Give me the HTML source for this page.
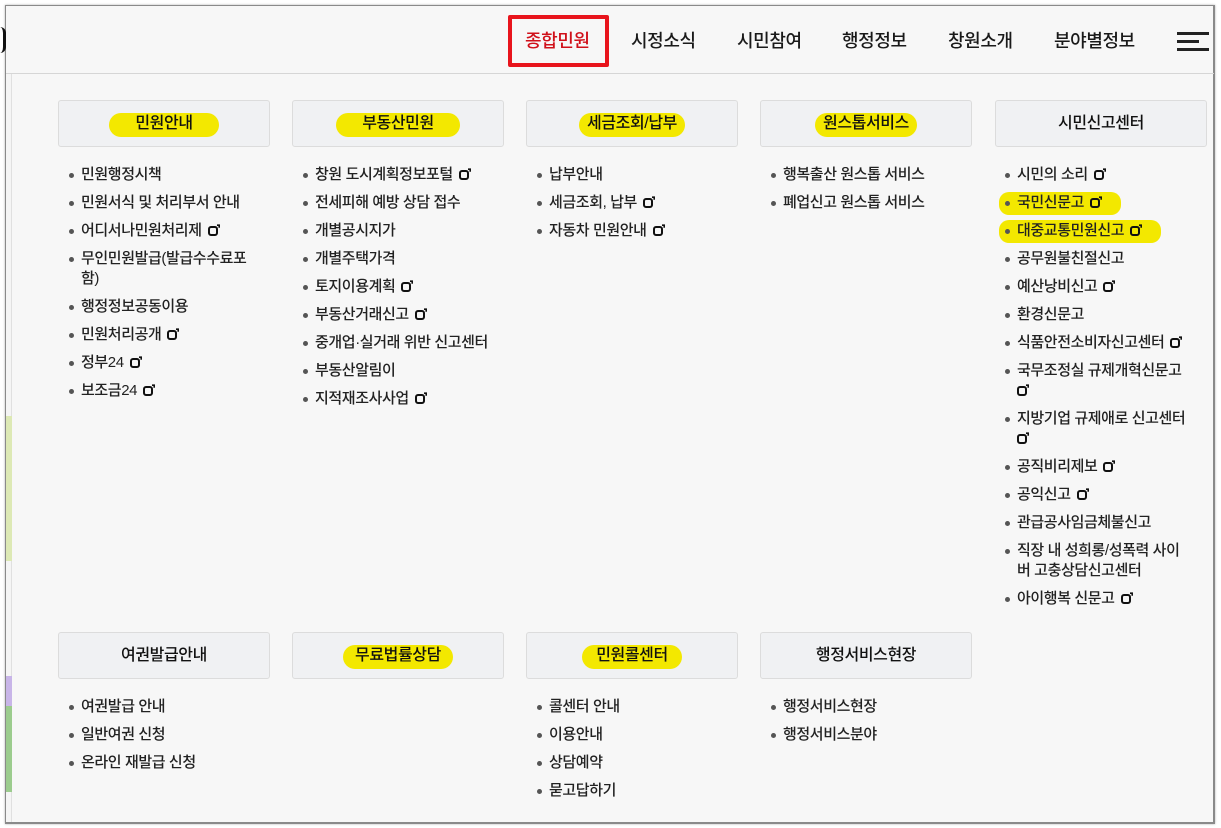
<!DOCTYPE html>
<html><head><meta charset="utf-8"><style>
*{margin:0;padding:0;box-sizing:border-box}
body{width:1221px;height:828px;background:#fff;position:relative;overflow:hidden;font-family:"Liberation Sans","Noto Sans CJK KR",sans-serif;color:#222}
.frame{position:absolute;left:5px;top:5px;width:1210px;height:819px;border:1px solid #8a8a8a;border-right:2px solid #8a8a8a;border-bottom:2px solid #8a8a8a;background:#f7f7f7;box-shadow:0 0 2px #aaa}
.strip{position:absolute;left:6px;top:74px;width:6px;height:748px;background:#f5f5f5;border-right:1px solid #e0e0e0}
.g1{position:absolute;left:6px;top:416px;width:6px;height:145px;background:#dde9b5}
.g2{position:absolute;left:6px;top:676px;width:6px;height:116px;background:#9ccc8e}
.g3{position:absolute;left:6px;top:676px;width:6px;height:30px;background:#c8b5e8}
.nav{position:absolute;left:6px;top:6px;width:1208px;height:68px;border-bottom:1px solid #d6d6d6}
.ni{position:absolute;top:24px;font-size:18px;font-weight:500;color:#1a1a1a;letter-spacing:-0.4px;line-height:22px}
.red{position:absolute;width:101px;height:52px;border:4px solid #e8141c;border-radius:2px}
.hb{position:absolute;height:3px;background:#222;left:1177px}
.box{position:absolute;width:212px;height:47px;border:1px solid #dcdcdc;border-radius:3px;background:#f0f1f3;text-align:center;line-height:45px;font-size:16px;font-weight:500;color:#111;letter-spacing:-0.4px}
.hl{background:#f3e800;border-radius:12px;padding:2px 26px 5px}
ul{position:absolute;list-style:none;font-size:15px;font-weight:500;letter-spacing:-0.4px;color:#222;width:200px}
li{position:relative;padding-left:13px;line-height:20px;margin-bottom:8px}
li:before{content:"";position:absolute;left:1px;top:8px;width:5px;height:5px;border-radius:50%;background:#555}
.hl2{background:#f3e800;border-radius:10px;padding:2px 18px 4px 6px;margin-left:-18px;padding-left:18px}
svg.e{width:13px;height:12px;vertical-align:-1px;margin-left:6px}
</style></head><body>
<div class="frame"></div>
<div class="strip"></div><div class="g1"></div><div class="g2"></div><div class="g3"></div>
<div style="position:absolute;left:0;top:27px;width:6px;height:26px;border-right:3px solid #111;border-radius:0 10px 10px 0"></div>
<div class="nav">
<div class="red" style="left:502px;top:9px"></div>
<div class="ni" style="left:519px;color:#d0101a">종합민원</div>
<div class="ni" style="left:625px">시정소식</div>
<div class="ni" style="left:731px">시민참여</div>
<div class="ni" style="left:836px">행정정보</div>
<div class="ni" style="left:942px">창원소개</div>
<div class="ni" style="left:1048px">분야별정보</div>
</div>
<div class="hb" style="top:32px;width:32px"></div>
<div class="hb" style="top:40px;width:22px"></div>
<div class="hb" style="top:48px;width:32px"></div>

<svg width="0" height="0" style="position:absolute"><defs><symbol id="x" viewBox="0 0 13 12"><rect x="1" y="3" width="8" height="8" rx="2" fill="none" stroke="#111" stroke-width="2"/><path d="M9 1.2H11.2V3.8" fill="none" stroke="#111" stroke-width="1.6"/></symbol></defs></svg>

<div class="box" style="left:58px;top:100px"><span class="hl">민원안내</span></div>
<div class="box" style="left:292px;top:100px"><span class="hl">부동산민원</span></div>
<div class="box" style="left:526px;top:100px"><span class="hl" style="padding:2px 8px 5px">세금조회/납부</span></div>
<div class="box" style="left:760px;top:100px"><span class="hl" style="padding:2px 8px 5px">원스톱서비스</span></div>
<div class="box" style="left:995px;top:100px">시민신고센터</div>
<div class="box" style="left:58px;top:632px">여권발급안내</div>
<div class="box" style="left:292px;top:632px"><span class="hl" style="padding:2px 12px 5px">무료법률상담</span></div>
<div class="box" style="left:526px;top:632px"><span class="hl" style="padding:2px 14px 5px">민원콜센터</span></div>
<div class="box" style="left:760px;top:632px">행정서비스현장</div>

<ul style="left:68px;top:165px;width:190px">
<li>민원행정시책</li>
<li>민원서식 및 처리부서 안내</li>
<li>어디서나민원처리제<svg class="e"><use href="#x"/></svg></li>
<li>무인민원발급(발급수수료포함)</li>
<li>행정정보공동이용</li>
<li>민원처리공개<svg class="e"><use href="#x"/></svg></li>
<li>정부24<svg class="e"><use href="#x"/></svg></li>
<li>보조금24<svg class="e"><use href="#x"/></svg></li>
</ul>
<ul style="left:302px;top:165px">
<li>창원 도시계획정보포털<svg class="e"><use href="#x"/></svg></li>
<li>전세피해 예방 상담 접수</li>
<li>개별공시지가</li>
<li>개별주택가격</li>
<li>토지이용계획<svg class="e"><use href="#x"/></svg></li>
<li>부동산거래신고<svg class="e"><use href="#x"/></svg></li>
<li>중개업·실거래 위반 신고센터</li>
<li>부동산알림이</li>
<li>지적재조사사업<svg class="e"><use href="#x"/></svg></li>
</ul>
<ul style="left:536px;top:165px">
<li>납부안내</li>
<li>세금조회, 납부<svg class="e"><use href="#x"/></svg></li>
<li>자동차 민원안내<svg class="e"><use href="#x"/></svg></li>
</ul>
<ul style="left:770px;top:165px">
<li>행복출산 원스톱 서비스</li>
<li>폐업신고 원스톱 서비스</li>
</ul>
<ul style="left:1004px;top:165px;width:188px">
<li>시민의 소리<svg class="e"><use href="#x"/></svg></li>
<li><span class="hl2">국민신문고<svg class="e"><use href="#x"/></svg></span></li>
<li><span class="hl2">대중교통민원신고<svg class="e"><use href="#x"/></svg></span></li>
<li>공무원불친절신고</li>
<li>예산낭비신고<svg class="e"><use href="#x"/></svg></li>
<li>환경신문고</li>
<li>식품안전소비자신고센터<svg class="e"><use href="#x"/></svg></li>
<li>국무조정실 규제개혁신문고<br><svg class="e" style="margin-left:0"><use href="#x"/></svg></li>
<li>지방기업 규제애로 신고센터<br><svg class="e" style="margin-left:0"><use href="#x"/></svg></li>
<li>공직비리제보<svg class="e"><use href="#x"/></svg></li>
<li>공익신고<svg class="e"><use href="#x"/></svg></li>
<li>관급공사임금체불신고</li>
<li>직장 내 성희롱/성폭력 사이<br>버 고충상담신고센터</li>
<li>아이행복 신문고<svg class="e"><use href="#x"/></svg></li>
</ul>
<ul style="left:68px;top:697px">
<li>여권발급 안내</li>
<li>일반여권 신청</li>
<li>온라인 재발급 신청</li>
</ul>
<ul style="left:536px;top:697px">
<li>콜센터 안내</li>
<li>이용안내</li>
<li>상담예약</li>
<li>묻고답하기</li>
</ul>
<ul style="left:770px;top:697px">
<li>행정서비스현장</li>
<li>행정서비스분야</li>
</ul>
</body></html>
